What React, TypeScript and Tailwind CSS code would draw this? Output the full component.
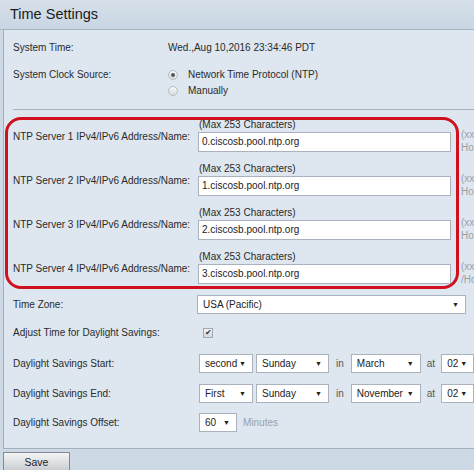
import React from 'react';

const ntpServers = [
  { n: 1, host: '0.ciscosb.pool.ntp.org', side: ['(xxxx.xxxx.xxxx.xxxx', 'Hostname)'] },
  { n: 2, host: '1.ciscosb.pool.ntp.org', side: ['(xxxx.xxxx.xxxx.xxxx', 'Hostname)'] },
  { n: 3, host: '2.ciscosb.pool.ntp.org', side: ['(xxxx.xxxx.xxxx.xxxx', 'Hostname)'] },
  { n: 4, host: '3.ciscosb.pool.ntp.org', side: ['(xxxx.xxxx.xxxx.xxxx', '/Hostname)'] },
];

const Select: React.FC<{ value: string; className: string }> = ({ value, className }) => (
  <div
    className={`${className} h-[19px] shrink-0 bg-white border border-[#aab3bd] flex items-center justify-between pl-[5px] pr-[6px] text-[#222]`}
  >
    <span>{value}</span>
    <span className="text-[7px] leading-none">▼</span>
  </div>
);

const Radio: React.FC<{ checked?: boolean }> = ({ checked }) => (
  <span className="w-[10px] h-[10px] rounded-full border border-[#b5bcc4] bg-gradient-to-b from-[#f6f7f8] to-[#d8dde2] flex items-center justify-center">
    {checked && <span className="w-[4px] h-[4px] rounded-full bg-[#555]" />}
  </span>
);

export default function App() {
  return (
    <div className="w-[474px] h-[470px] overflow-hidden bg-[#cdd9e5] text-[10px] leading-[14px] text-[#2a2a2a] font-['Liberation_Sans',Arial,sans-serif]">
      {/* Header */}
      <div className="h-[30px] border-b border-[#a9b5c1] bg-gradient-to-b from-[#d6e0ea] to-[#c9d6e3] pl-[10px] pt-[5px] text-[14.5px] leading-[18px] text-[#1b1b1b]">
        Time Settings
      </div>

      {/* Panel */}
      <div className="ml-[3px] h-[419px] border-l border-b border-[#a3afbb] bg-[#dee7f0] pl-[9px] pt-[10px]">
        <div className="flex h-[16px] items-center">
          <span className="w-[155px] shrink-0">System Time:</span>
          <span>Wed.,Aug 10,2016 23:34:46 PDT</span>
        </div>

        <div className="flex mt-[11px]">
          <span className="w-[155px] shrink-0 h-[16px] flex items-center">System Clock Source:</span>
          <div className="flex flex-col">
            <div className="flex h-[16px] items-center">
              <Radio checked />
              <span className="ml-[10px]">Network Time Protocol (NTP)</span>
            </div>
            <div className="flex h-[15px] items-center">
              <Radio />
              <span className="ml-[10px]">Manually</span>
            </div>
          </div>
        </div>

        <div className="mt-[11px] border-t border-[#a7b1bb]" />

        {/* NTP servers */}
        <div className="relative mt-[8px] flex flex-col gap-[10px]">
          {ntpServers.map((s) => (
            <div key={s.n} className="flex">
              <span className="w-[185px] shrink-0 pt-[12px] whitespace-nowrap">
                NTP Server {s.n} IPv4/IPv6 Address/Name:
              </span>
              <div className="flex flex-col">
                <span className="pl-[1px] h-[14px]">(Max 253 Characters)</span>
                <div className="flex h-[20px]">
                  <div className="w-[253px] h-[20px] shrink-0 bg-white border border-[#aab3bd] flex items-center pl-[3px] text-[#222]">
                    {s.host}
                  </div>
                  <div className="ml-[10px] h-[20px] -mt-[4px] text-[#9a9fa5] leading-[13px] whitespace-nowrap">
                    <div>{s.side[0]}</div>
                    <div>{s.side[1]}</div>
                  </div>
                </div>
              </div>
            </div>
          ))}
          <div className="absolute left-[-8px] top-[-1px] w-[454px] h-[172px] rounded-[16px] border-[3px] border-[#d0101e]" />
        </div>

        <div className="flex mt-[11px] items-center">
          <span className="w-[184px] shrink-0">Time Zone:</span>
          <Select value="USA (Pacific)" className="w-[269px]" />
        </div>

        <div className="flex mt-[11px] h-[16px] items-center">
          <span className="w-[190px] shrink-0">Adjust Time for Daylight Savings:</span>
          <span className="w-[10px] h-[10px] border border-[#a0a7ae] bg-gradient-to-b from-[#f2f3f4] to-[#d3d8dd] flex items-center justify-center text-[8px] leading-none text-[#333]">
            ✔
          </span>
        </div>

        <div className="flex mt-[13px] items-center">
          <span className="w-[186px] shrink-0">Daylight Savings Start:</span>
          <Select value="second" className="w-[54px]" />
          <div className="w-[3px] shrink-0" />
          <Select value="Sunday" className="w-[73px]" />
          <span className="px-[7px] text-[#555]">in</span>
          <Select value="March" className="w-[70px]" />
          <span className="px-[6px] text-[#555]">at</span>
          <Select value="02" className="w-[33px]" />
        </div>

        <div className="flex mt-[11px] items-center">
          <span className="w-[186px] shrink-0">Daylight Savings End:</span>
          <Select value="First" className="w-[54px]" />
          <div className="w-[3px] shrink-0" />
          <Select value="Sunday" className="w-[73px]" />
          <span className="px-[7px] text-[#555]">in</span>
          <Select value="November" className="w-[70px]" />
          <span className="px-[6px] text-[#555]">at</span>
          <Select value="02" className="w-[33px]" />
        </div>

        <div className="flex mt-[10px] items-center">
          <span className="w-[186px] shrink-0">Daylight Savings Offset:</span>
          <Select value="60" className="w-[38px]" />
          <span className="ml-[6px] text-[#9aa0a6]">Minutes</span>
        </div>
      </div>

      <div className="pl-[3px] pt-[3px]">
        <button className="w-[67px] h-[20px] border border-[#7f8a95] bg-gradient-to-b from-[#f5f5f5] to-[#c8ccd1] text-[10.5px] text-[#222] leading-none">
          Save
        </button>
      </div>
    </div>
  );
}
